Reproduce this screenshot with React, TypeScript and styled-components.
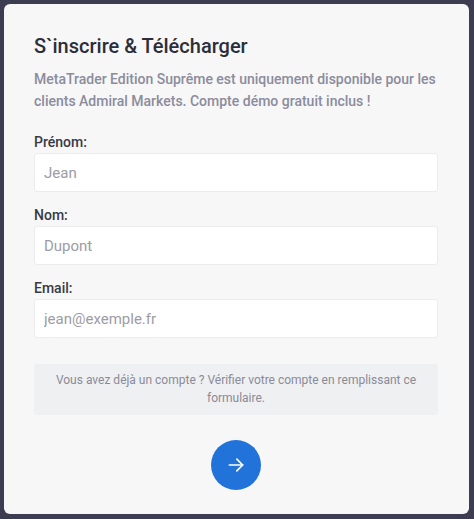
import React from 'react';
import styled, { createGlobalStyle } from 'styled-components';

const GlobalStyle = createGlobalStyle`
  html, body {
    margin: 0;
    padding: 0;
    background: #3d3d51;
  }
  * {
    box-sizing: border-box;
  }
`;

export const Page = styled.div`
  width: 474px;
  height: 519px;
  padding: 4px 5px 5px 4px;
  font-family: Roboto, 'Noto Sans', sans-serif;
`;

export const Card = styled.form`
  height: 510px;
  background: #f7f7f8;
  border-radius: 6px;
  padding: 30px 31px 0 30px;
  display: flex;
  flex-direction: column;
`;

export const Title = styled.h1`
  margin: 0;
  font-size: 20px;
  line-height: 24px;
  font-weight: 500;
  color: #2c2e38;
`;

export const Lead = styled.p`
  margin: 10px 0 0;
  font-size: 14px;
  line-height: 22px;
  font-weight: 500;
  color: #8b8c9c;
`;

export const Fields = styled.div`
  display: flex;
  flex-direction: column;
  gap: 13px;
  margin-top: 20px;
`;

export const Field = styled.label`
  display: flex;
  flex-direction: column;
  gap: 1px;
`;

export const LabelText = styled.span`
  font-size: 14px;
  line-height: 20px;
  font-weight: 500;
  color: #393a44;
`;

export const Input = styled.input`
  height: 39px;
  width: 100%;
  border: 1px solid #ececee;
  border-radius: 3px;
  background: #fff;
  padding: 0 9px;
  font-family: inherit;
  font-size: 15px;
  color: #333;
  outline: none;

  &::placeholder {
    color: #9c9ca6;
  }
`;

export const Notice = styled.div`
  margin-top: 26px;
  background: #eff0f2;
  border-radius: 3px;
  padding: 7px 20px 8px;
  text-align: center;
  font-size: 12px;
  line-height: 18px;
  color: #8a8b98;
`;

export const Actions = styled.div`
  display: flex;
  justify-content: center;
  margin-top: 25px;
`;

export const RoundButton = styled.button`
  width: 50px;
  height: 50px;
  border-radius: 50%;
  border: none;
  background: #2172d9;
  display: flex;
  align-items: center;
  justify-content: center;
  cursor: pointer;
  padding: 0;
`;

const ArrowIcon = () => (
  <svg width="20" height="20" viewBox="0 0 24 24" fill="none" stroke="#fff" strokeWidth="2" strokeLinecap="round" strokeLinejoin="round">
    <path d="M4 12h16" />
    <path d="M13 5l7 7-7 7" />
  </svg>
);

const App = () => {
  return (
    <>
      <GlobalStyle />
      <Page>
        <Card onSubmit={(e) => e.preventDefault()}>
          <Title>S`inscrire &amp; Télécharger</Title>
          <Lead>
            MetaTrader Edition Suprême est uniquement disponible pour les clients Admiral Markets. Compte démo gratuit inclus !
          </Lead>
          <Fields>
            <Field>
              <LabelText>Prénom:</LabelText>
              <Input placeholder="Jean" />
            </Field>
            <Field>
              <LabelText>Nom:</LabelText>
              <Input placeholder="Dupont" />
            </Field>
            <Field>
              <LabelText>Email:</LabelText>
              <Input type="email" placeholder="jean@exemple.fr" />
            </Field>
          </Fields>
          <Notice>
            Vous avez déjà un compte ? Vérifier votre compte en remplissant ce formulaire.
          </Notice>
          <Actions>
            <RoundButton type="submit" aria-label="Envoyer">
              <ArrowIcon />
            </RoundButton>
          </Actions>
        </Card>
      </Page>
    </>
  );
};

export default App;
